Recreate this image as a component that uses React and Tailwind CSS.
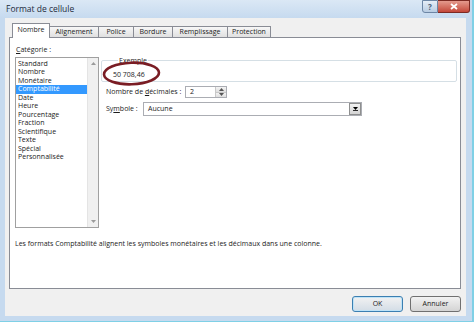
import { useState } from 'react';

const categories = [
  'Standard',
  'Nombre',
  'Monétaire',
  'Comptabilité',
  'Date',
  'Heure',
  'Pourcentage',
  'Fraction',
  'Scientifique',
  'Texte',
  'Spécial',
  'Personnalisée',
];

const tabs = [
  { label: 'Nombre', w: 'w-[38px]' },
  { label: 'Alignement', w: 'w-[50px]' },
  { label: 'Police', w: 'w-[36px]' },
  { label: 'Bordure', w: 'w-[40px]' },
  { label: 'Remplissage', w: 'w-[56px]' },
  { label: 'Protection', w: 'w-[44px]' },
];

const Arrow = ({ up, className }) => (
  <svg width="5" height="3" viewBox="0 0 5 3" className={className}>
    <path d={up ? 'M0 3 L2.5 0 L5 3 Z' : 'M0 0 L2.5 3 L5 0 Z'} fill="currentColor" />
  </svg>
);

const App = () => {
  const [selected, setSelected] = useState('Comptabilité');

  return (
    <div className="w-[474px] h-[322px] bg-[#c6daef] flex flex-col pl-[5px] pr-[6px] pb-[5px] border-r-2 border-b border-[#7fd0e6] text-[#1b1b1b] font-['Open_Sans',sans-serif] text-[7px] whitespace-nowrap overflow-hidden">
      {/* title bar */}
      <div className="h-[18px] flex items-start justify-between bg-gradient-to-b from-[#dbe8f5] to-[#c6daef] -ml-[5px] pl-[6px] -mr-[4px]">
        <span className="text-[8.5px] text-[#1e2b3c] mt-[3px] leading-[12px]">Format de cellule</span>
        <div className="flex">
          <div className="w-[16px] h-[13px] bg-gradient-to-b from-[#e6eef7] to-[#b8cce2] border border-[#6d86a5] rounded-bl-[3px] flex items-center justify-center text-[8px] leading-none text-[#4b5f78] font-bold">
            ?
          </div>
          <div className="w-[32px] h-[13px] bg-gradient-to-b from-[#e49a8e] to-[#c3473a] border border-l-0 border-[#7c2a23] rounded-br-[3px] flex items-center justify-center">
            <svg width="8" height="7" viewBox="0 0 8 7">
              <path d="M1 1 L7 6 M7 1 L1 6" stroke="white" strokeWidth="1.8" />
            </svg>
          </div>
        </div>
      </div>

      {/* client area */}
      <div className="flex-1 bg-[#f0f0f0] flex flex-col pl-[4px] pr-[5px] pt-[5px]">
        {/* tabs */}
        <div className="h-[15px] flex items-end pl-[3px] relative z-10 -mb-px">
          {tabs.map((t, i) =>
            i === 0 ? (
              <div
                key={t.label}
                className={`${t.w} h-[15px] bg-white border border-b-0 border-[#898c95] flex items-center justify-center pb-[1px]`}
              >
                {t.label}
              </div>
            ) : (
              <div
                key={t.label}
                className={`${t.w} h-[12px] -ml-px bg-gradient-to-b from-[#f7f7f7] to-[#e0e0e0] border border-[#898c95] flex items-center justify-center`}
              >
                {t.label}
              </div>
            )
          )}
        </div>

        {/* panel */}
        <div className="h-[252px] bg-white border border-[#898c95] flex flex-col">
          <div className="flex">
            {/* left column */}
            <div className="pl-[5px] flex flex-col">
              <div className="mt-[7px] ml-[1px] leading-[10px]">
                <span className="underline">C</span>atégorie :
              </div>
              <div className="mt-[2px] w-[84px] h-[171px] border border-[#a0a0a0] flex">
                <div className="flex-1 pt-[1.5px]">
                  {categories.map((c) => (
                    <div
                      key={c}
                      onClick={() => setSelected(c)}
                      className={`h-[8.5px] leading-[8.5px] pl-[2px] ${
                        selected === c ? 'bg-[#3399ff] text-white' : ''
                      }`}
                    >
                      {c}
                    </div>
                  ))}
                </div>
                <div className="w-[11px] bg-[#f0f0f0] border-l border-[#e4e4e4] flex flex-col items-center justify-between py-[4px] text-[#9a9a9a]">
                  <Arrow up />
                  <Arrow />
                </div>
              </div>
            </div>

            {/* right column */}
            <div className="ml-[2px] w-[356px] flex flex-col">
              <fieldset className="mt-[18px] border border-[#d5dfe5] rounded-[2px] pl-[11px] pb-[1px]">
                <legend className="ml-[5px] px-[1px] leading-[9px]">Exemple</legend>
                <div className="relative mt-[5px] leading-[10px] w-fit">
                  50 708,46
                  <svg
                    className="absolute left-[-11px] top-[-9px]"
                    width="59"
                    height="25"
                    viewBox="0 0 59 25"
                  >
                    <ellipse
                      cx="29.5"
                      cy="12.5"
                      rx="27.5"
                      ry="10.8"
                      fill="none"
                      stroke="#7a1d24"
                      strokeWidth="2.6"
                      transform="rotate(-2 29.5 12.5)"
                    />
                  </svg>
                </div>
              </fieldset>

              <div className="mt-[4px] pl-[5px] flex items-center">
                <div className="w-[79px]">
                  Nombre de <span className="underline">d</span>écimales :
                </div>
                <div className="w-[42px] h-[12px] border border-[#abadb3] flex">
                  <div className="flex-1 pl-[4px] leading-[10px]">2</div>
                  <div className="w-[11px] flex flex-col border-l border-[#c8c8c8]">
                    <div className="flex-1 bg-gradient-to-b from-[#f4f4f4] to-[#dedede] border-b border-[#c8c8c8] flex items-center justify-center text-[#555]">
                      <Arrow up />
                    </div>
                    <div className="flex-1 bg-gradient-to-b from-[#f4f4f4] to-[#dedede] flex items-center justify-center text-[#555]">
                      <Arrow />
                    </div>
                  </div>
                </div>
              </div>

              <div className="mt-[4px] pl-[5px] flex items-center">
                <div className="w-[37px]">
                  Sy<span className="underline">m</span>bole :
                </div>
                <div className="w-[219px] h-[14px] border border-[#abadb3] flex items-center">
                  <div className="flex-1 pl-[4px]">Aucune</div>
                  <div className="w-[12px] h-[12px] bg-gradient-to-b from-[#f2f2f2] to-[#d4d4d4] border border-[#8e8f8f] flex items-center justify-center text-black">
                    <svg width="5" height="4" viewBox="0 0 5 4">
                      <path d="M0 0 H5 L2.5 3 Z" fill="currentColor" />
                      <path d="M0 3.5 H5" stroke="currentColor" strokeWidth="0.8" />
                    </svg>
                  </div>
                </div>
              </div>
            </div>
          </div>

          <p className="mt-[11px] pl-[5px] leading-[10px]">
            Les formats Comptabilité alignent les symboles monétaires et les décimaux dans une colonne.
          </p>
        </div>

        {/* buttons */}
        <div className="mt-[7px] flex justify-end gap-[7px]">
          <button className="w-[51px] h-[16px] rounded-[3px] border border-[#3c7fb1] bg-gradient-to-b from-[#f2f2f2] to-[#d3dde6] shadow-[inset_0_0_0_1px_#bfe3f7] text-[7px]">
            OK
          </button>
          <button className="w-[51px] h-[16px] rounded-[3px] border border-[#707070] bg-gradient-to-b from-[#f2f2f2] to-[#d4d4d4] text-[7px]">
            Annuler
          </button>
        </div>
      </div>
    </div>
  );
};

export default App;
